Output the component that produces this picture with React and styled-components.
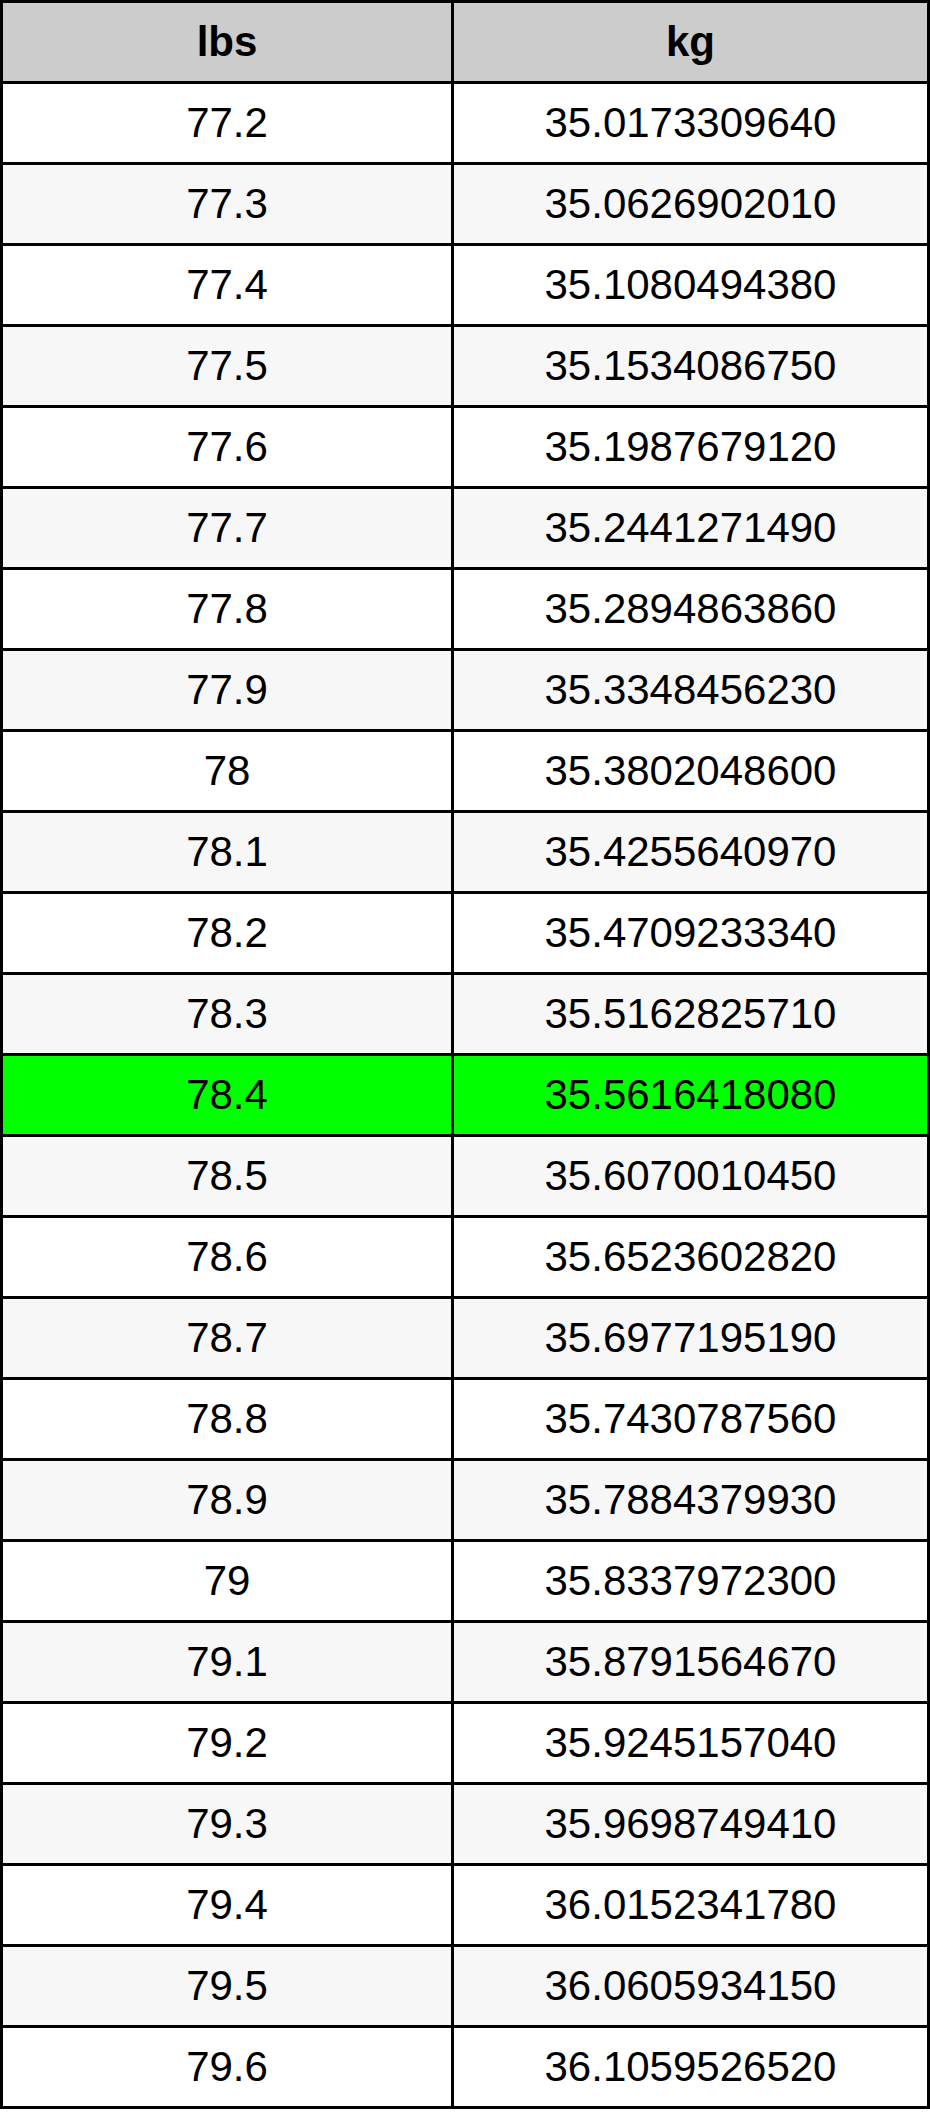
import React from "react";
import styled, { createGlobalStyle } from "styled-components";

const GlobalStyle = createGlobalStyle`
  html, body {
    margin: 0;
    padding: 0;
    background: #ffffff;
  }
  body {
    font-family: "Liberation Sans", Arial, Helvetica, sans-serif;
  }
`;

const Table = styled.div`
  display: grid;
  grid-template-columns: 448px 1fr;
  grid-auto-rows: 78px;
  gap: 3px;
  padding: 3px;
  width: 930px;
  box-sizing: border-box;
  background: #000000;
`;

const Cell = styled.div`
  display: flex;
  align-items: center;
  justify-content: center;
  font-size: 42px;
  color: #000000;
  font-weight: ${(p) => (p.$head ? 700 : 400)};
  background: ${(p) =>
    p.$head ? "#cccccc" : p.$hit ? "#00ff00" : p.$odd ? "#f7f7f7" : "#ffffff"};
`;

const rows = [
  ["77.2", "35.0173309640"],
  ["77.3", "35.0626902010"],
  ["77.4", "35.1080494380"],
  ["77.5", "35.1534086750"],
  ["77.6", "35.1987679120"],
  ["77.7", "35.2441271490"],
  ["77.8", "35.2894863860"],
  ["77.9", "35.3348456230"],
  ["78", "35.3802048600"],
  ["78.1", "35.4255640970"],
  ["78.2", "35.4709233340"],
  ["78.3", "35.5162825710"],
  ["78.4", "35.5616418080"],
  ["78.5", "35.6070010450"],
  ["78.6", "35.6523602820"],
  ["78.7", "35.6977195190"],
  ["78.8", "35.7430787560"],
  ["78.9", "35.7884379930"],
  ["79", "35.8337972300"],
  ["79.1", "35.8791564670"],
  ["79.2", "35.9245157040"],
  ["79.3", "35.9698749410"],
  ["79.4", "36.0152341780"],
  ["79.5", "36.0605934150"],
  ["79.6", "36.1059526520"],
];

export default function App() {
  return (
    <>
      <GlobalStyle />
      <Table>
        <Cell $head>lbs</Cell>
        <Cell $head>kg</Cell>
        {rows.map(([lbs, kg], i) => {
          const hit = lbs === "78.4";
          const odd = i % 2 === 1;
          return (
            <React.Fragment key={lbs}>
              <Cell $hit={hit} $odd={odd}>{lbs}</Cell>
              <Cell $hit={hit} $odd={odd}>{kg}</Cell>
            </React.Fragment>
          );
        })}
      </Table>
    </>
  );
}
